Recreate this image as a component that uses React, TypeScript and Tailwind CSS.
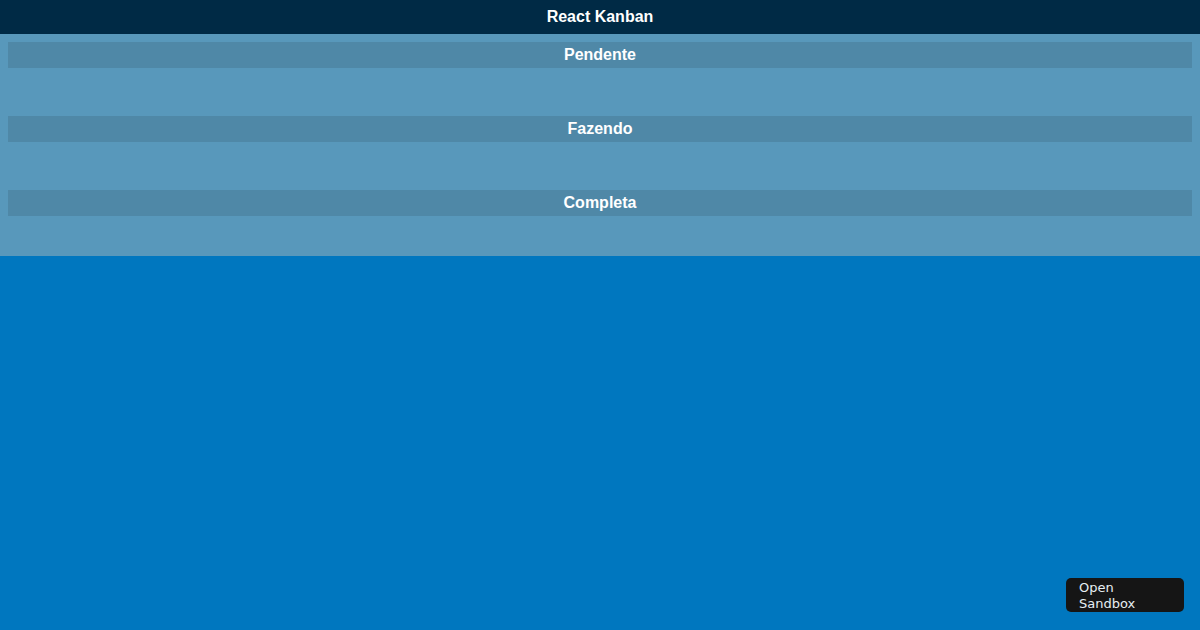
import React from "react";

const columns = ["Pendente", "Fazendo", "Completa"];

export default function App() {
  return (
    <div className="relative h-[630px] w-[1200px] bg-[#0077bf] font-['Liberation_Sans',Arial,sans-serif]">
      <header className="flex h-[34px] items-center justify-center bg-[#002a45] text-[16px] font-bold text-white">
        React Kanban
      </header>
      <main className="flex flex-col bg-[#5898bb] px-2">
        {columns.map((c) => (
          <section key={c} className="mt-2 flex flex-col">
            <h2 className="flex h-[26px] items-center justify-center bg-[#4f88a7] text-[16px] font-bold text-white">
              {c}
            </h2>
            <div className="h-[40px]" />
          </section>
        ))}
      </main>
      <button className="absolute left-[1066px] top-[578px] h-[34px] w-[118px] rounded-[5px] bg-[#151515] pl-[13px] pt-[1px] text-left font-['DejaVu_Sans',sans-serif] text-[13px] leading-[16px] text-[#e6eef2]">
        Open
        <br />
        Sandbox
      </button>
    </div>
  );
}
